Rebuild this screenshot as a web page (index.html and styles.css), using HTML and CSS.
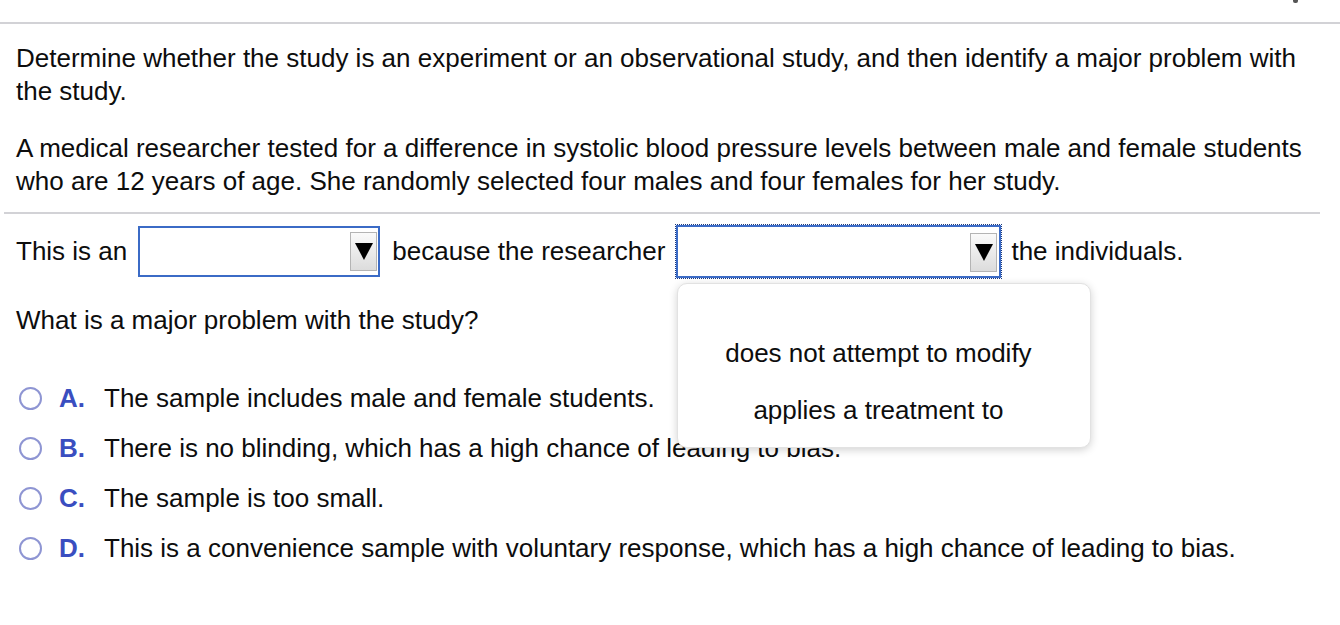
FILE: index.html
```html
<!DOCTYPE html>
<html lang="en">
<head>
    <meta charset="UTF-8">
    <meta name="viewport" content="width=device-width, initial-scale=1.0">
    <title>Experiment or Observational Study</title>
    <link rel="stylesheet" href="styles.css">
</head>
<body>
    <div class="topbar"><span class="corner-mark"></span></div>

    <div class="question">
        <p class="prompt">Determine whether the study is an experiment or an observational study, and then identify a major problem with the study.</p>
        <p class="prompt prompt-second">A medical researcher tested for a difference in systolic blood pressure levels between male and female students who are 12 years of age. She randomly selected four males and four females for her study.</p>
    </div>

    <div class="answer">
        <div class="fill-row">
            <span>This is an</span>
            <span class="select select-first">
                <span class="select-arrow"></span>
            </span>
            <span>because the researcher</span>
            <span class="select-wrap">
                <span class="select select-second">
                    <span class="select-arrow"></span>
                </span>
                <div class="dropdown">
                    <div class="dropdown-item">does not attempt to modify</div>
                    <div class="dropdown-item">applies a treatment to</div>
                </div>
            </span>
            <span>the individuals.</span>
        </div>

        <p class="sub-question">What is a major problem with the study?</p>

        <ul class="choices">
            <li><span class="radio"></span><span class="letter">A.</span><span>The sample includes male and female students.</span></li>
            <li><span class="radio"></span><span class="letter">B.</span><span>There is no blinding, which has a high chance of leading to bias.</span></li>
            <li><span class="radio"></span><span class="letter">C.</span><span>The sample is too small.</span></li>
            <li><span class="radio"></span><span class="letter">D.</span><span>This is a convenience sample with voluntary response, which has a high chance of leading to bias.</span></li>
        </ul>
    </div>
</body>
</html>
```

FILE: styles.css
```css
body {
    font-family: 'Liberation Sans', Arial, sans-serif;
    font-size: 26px;
    line-height: 33px;
    color: #0d0d0d;
    margin: 0;
    background-color: white;
}
.topbar {
    height: 22px;
    border-bottom: 2px solid #d2d2d6;
    position: relative;
}
.corner-mark {
    position: absolute;
    top: 0;
    left: 1293px;
    width: 5px;
    height: 3px;
    background-color: #555;
    border-radius: 0 0 2px 2px;
}
.question {
    margin: 0 20px 0 4px;
    padding: 18px 0 14px 12px;
    border-bottom: 2px solid #d2d2d6;
}
.prompt {
    margin: 0;
}
.prompt-second {
    margin-top: 24px;
}
.answer {
    padding: 10px 0 0 16px;
}
.fill-row {
    display: flex;
    align-items: center;
    height: 55px;
}
.select {
    position: relative;
    display: inline-block;
    box-sizing: border-box;
    border: 2px solid #3b6bc6;
    background-color: white;
}
.select-first {
    width: 242px;
    height: 51px;
    margin: 0 12px 0 11px;
}
.select-second {
    width: 325px;
    height: 53px;
    outline: 1px dotted #1d3a80;
}
.select-wrap {
    position: relative;
    display: flex;
    margin: 0 10px 0 11px;
}
.select-arrow {
    position: absolute;
    right: 1px;
    top: 4px;
    width: 27px;
    height: 39px;
    box-sizing: border-box;
    border: 1px solid #b4b4b4;
    background: linear-gradient(#fafafa, #dcdcdc);
}
.select-second .select-arrow {
    top: 6px;
    right: 2px;
}
.select-arrow::after {
    content: '';
    position: absolute;
    left: 4px;
    top: 10px;
    border-left: 9px solid transparent;
    border-right: 9px solid transparent;
    border-top: 17px solid #000;
}
.dropdown {
    position: absolute;
    left: 1px;
    top: 58px;
    width: 414px;
    height: 165px;
    box-sizing: border-box;
    padding: 53px 12px 0 0;
    background-color: white;
    border: 1px solid #e2e2e2;
    border-radius: 10px;
    box-shadow: 0 2px 8px rgba(0,0,0,0.18);
    text-align: center;
    z-index: 2;
}
.dropdown-item {
    height: 57px;
    line-height: 33px;
}
.sub-question {
    margin: 25px 0 0 0;
}
.choices {
    list-style: none;
    margin: 36px 0 0 0;
    padding: 0;
}
.choices li {
    display: flex;
    align-items: center;
    height: 50px;
}
.radio {
    display: inline-block;
    box-sizing: border-box;
    width: 23px;
    height: 23px;
    border: 2.5px solid #8e95d3;
    border-radius: 50%;
    margin: 0 17px 0 3px;
}
.letter {
    font-weight: bold;
    color: #3a4ec0;
    width: 45px;
}
```
